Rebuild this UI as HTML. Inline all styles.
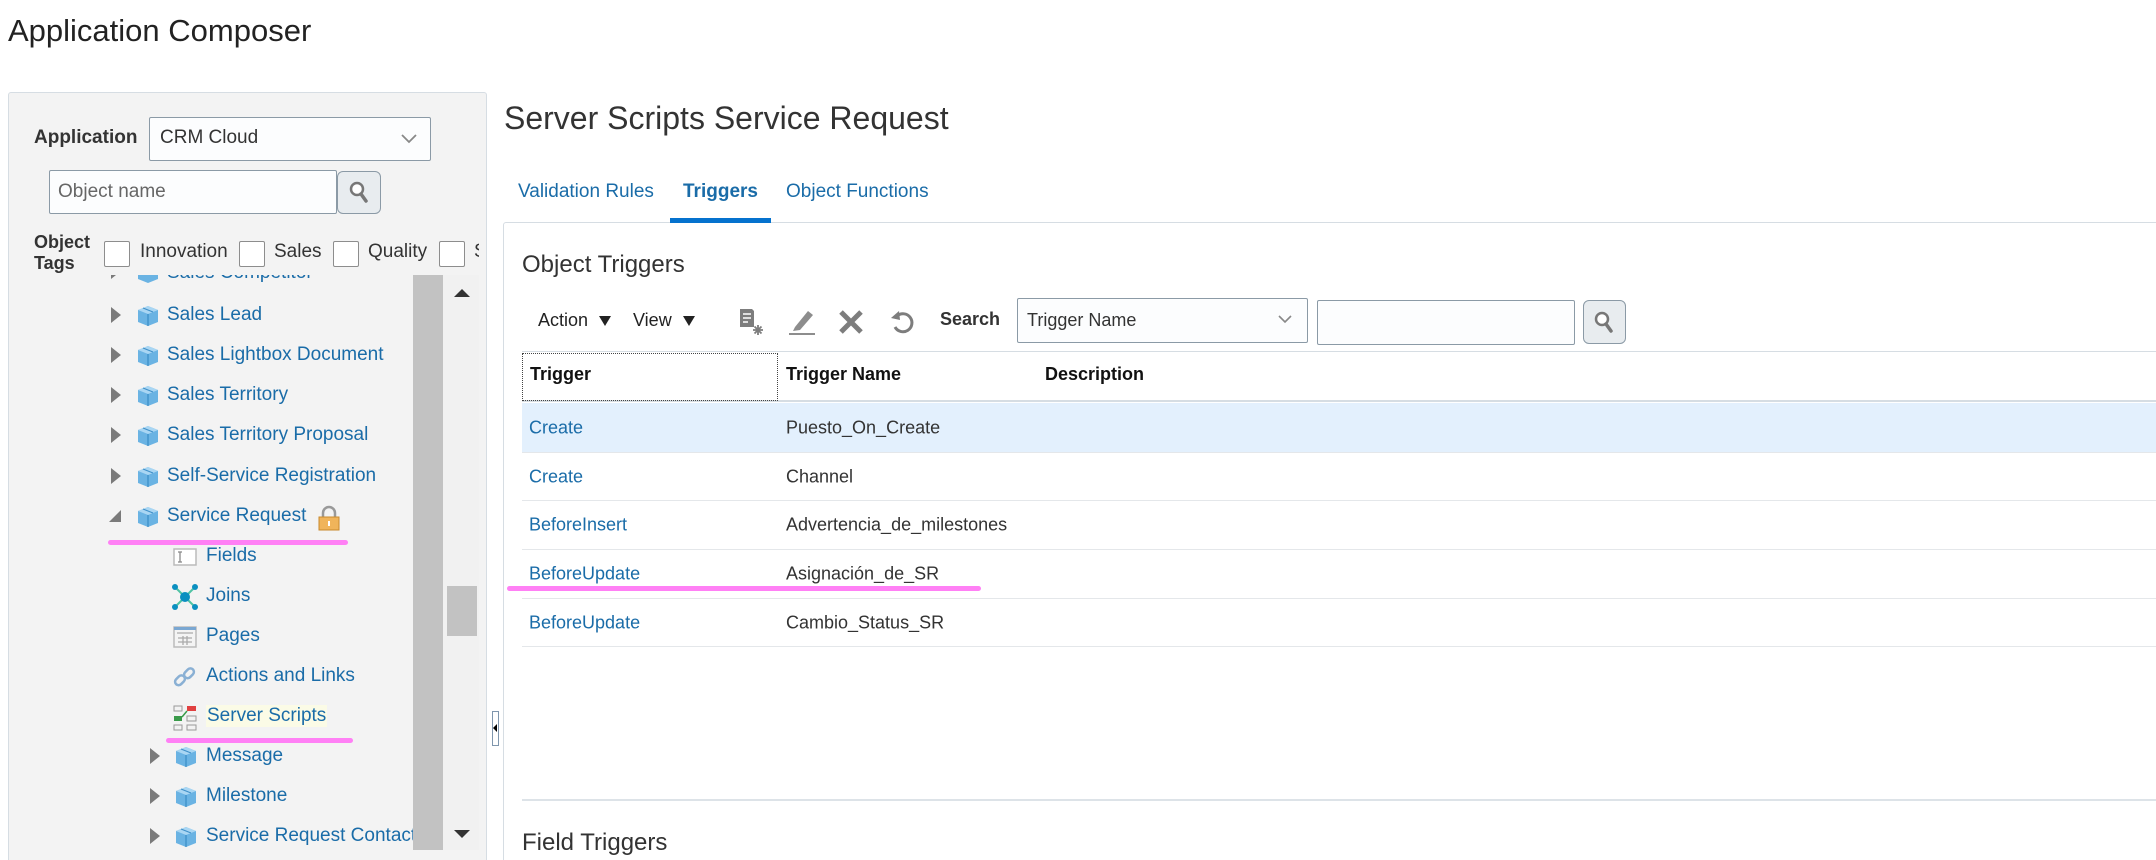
<!DOCTYPE html>
<html><head><meta charset="utf-8"><style>
*{margin:0;padding:0;box-sizing:border-box}
html{width:2156px;height:860px;overflow:hidden}
body{width:2156px;height:860px;overflow:hidden;background:#fff;font-family:"Liberation Sans",Arial,sans-serif;position:relative;color:#333}
.a{position:absolute;white-space:nowrap}
.lnk{color:#1a6ca8}
.tr{font-size:19px;color:#1a6ca8;line-height:22px}
.arr{position:absolute;width:0;height:0;border-top:8px solid transparent;border-bottom:8px solid transparent;border-left:10px solid #7a7a7a}
.cb{position:absolute;width:26px;height:26px;border:1px solid #8d8d8d;background:#fff;border-radius:2px}
.row{position:absolute;left:522px;width:1634px;border-bottom:1px solid #e4e7ea;font-size:18px}
.row span{position:absolute;top:50%;transform:translateY(-50%)}
</style></head><body>
<div class="a" style="left:8px;top:13px;font-size:31px;color:#222">Application Composer</div>

<!-- left panel -->
<div class="a" style="left:8px;top:92px;width:479px;height:790px;background:#f3f3f3;border:1px solid #d6dde3;border-radius:3px"></div>
<div class="a" style="left:34px;top:127px;font-size:19px;font-weight:bold;color:#333">Application</div>
<div class="a" style="left:149px;top:117px;width:282px;height:44px;background:#fcfdfe;border:1px solid #8b9aa6;border-radius:2px"></div>
<div class="a" style="left:160px;top:127px;font-size:19px;color:#333">CRM Cloud</div>
<svg class="a" style="left:400px;top:133px" width="18" height="12"><path d="M2 2 L9 9 L16 2" stroke="#888" stroke-width="1.8" fill="none"/></svg>
<div class="a" style="left:49px;top:170px;width:288px;height:44px;background:#fcfdfe;border:1px solid #8b9aa6;border-radius:2px"></div>
<div class="a" style="left:58px;top:181px;font-size:19px;color:#666">Object name</div>
<div class="a" style="left:337px;top:171px;width:44px;height:43px;background:#e8ecef;border:1px solid #8b9aa6;border-radius:6px"></div>
<svg class="a" style="left:347px;top:179px" width="24" height="26"><circle cx="10" cy="10" r="6" stroke="#777" stroke-width="2.5" fill="#fff"/><path d="M14 15 L19 22" stroke="#777" stroke-width="3.5" stroke-linecap="round"/></svg>
<div class="a" style="left:34px;top:232px;font-size:18px;font-weight:bold;line-height:21px;color:#333">Object<br>Tags</div>
<div class="cb" style="left:104px;top:241px"></div><div class="a" style="left:140px;top:241px;font-size:19px">Innovation</div>
<div class="cb" style="left:239px;top:241px"></div><div class="a" style="left:274px;top:241px;font-size:19px">Sales</div>
<div class="cb" style="left:333px;top:241px"></div><div class="a" style="left:368px;top:241px;font-size:19px">Quality</div>
<div class="cb" style="left:439px;top:241px"></div>
<div class="a" style="left:474px;top:241px;width:5px;overflow:hidden;font-size:19px">S</div>

<!-- tree -->
<div class="a" style="left:100px;top:275px;width:313px;height:585px;overflow:hidden">
<div class="arr" style="left:11px;top:-12px"></div>
<svg class="a" style="left:37px;top:-13px" width="22" height="22"><path d="M11 1 L21 5 L21 17 L11 21 L1 17 L1 5 Z" fill="#6ab3e3"/></svg>
<div class="a tr" style="left:67px;top:-13px">Sales Competitor</div>
</div>
<div class="a" style="left:413px;top:275px;width:30px;height:575px;background:#c2c2c2"></div>
<div class="a" style="left:443px;top:275px;width:36px;height:575px;background:#f1f1f1"></div>
<div class="a" style="left:454px;top:289px;border-left:8px solid transparent;border-right:8px solid transparent;border-bottom:8px solid #333"></div>
<div class="a" style="left:447px;top:586px;width:30px;height:50px;background:#c2c2c2"></div>
<div class="a" style="left:454px;top:830px;border-left:8px solid transparent;border-right:8px solid transparent;border-top:8px solid #333"></div>

<svg width="0" height="0" style="position:absolute"><defs><g id="cb"><path d="M11 1 L21 5 L21 17 L11 21 L1 17 L1 5 Z" fill="#6ab3e3"/><path d="M1 5 L11 9 L21 5 L11 1 Z" fill="#a9d6f3"/><path d="M11 9 L11 21" stroke="#3d8fc8" stroke-width="1.3"/><path d="M6 3 L16 7" stroke="#3d8fc8" stroke-width="1"/></g></defs></svg>

<div class="arr" style="left:111px;top:307px"></div><svg class="a" style="left:137px;top:305px" width="22" height="22"><use href="#cb"/></svg><div class="a tr" style="left:167px;top:304px">Sales Lead</div>
<div class="arr" style="left:111px;top:347px"></div><svg class="a" style="left:137px;top:345px" width="22" height="22"><use href="#cb"/></svg><div class="a tr" style="left:167px;top:344px">Sales Lightbox Document</div>
<div class="arr" style="left:111px;top:387px"></div><svg class="a" style="left:137px;top:385px" width="22" height="22"><use href="#cb"/></svg><div class="a tr" style="left:167px;top:384px">Sales Territory</div>
<div class="arr" style="left:111px;top:427px"></div><svg class="a" style="left:137px;top:425px" width="22" height="22"><use href="#cb"/></svg><div class="a tr" style="left:167px;top:424px">Sales Territory Proposal</div>
<div class="arr" style="left:111px;top:468px"></div><svg class="a" style="left:137px;top:466px" width="22" height="22"><use href="#cb"/></svg><div class="a tr" style="left:167px;top:465px">Self-Service Registration</div>
<div class="a" style="left:109px;top:510px;border-left:12px solid transparent;border-bottom:12px solid #7a7a7a"></div>
<svg class="a" style="left:137px;top:506px" width="22" height="22"><use href="#cb"/></svg><div class="a tr" style="left:167px;top:505px">Service Request</div>
<svg class="a" style="left:316px;top:505px" width="26" height="26"><path d="M7 12 V8 a6 6 0 0 1 12 0 V12" stroke="#999" stroke-width="2.5" fill="none"/><rect x="3" y="12" width="20" height="13" fill="#f0b45a" stroke="#c98a2e"/><rect x="12" y="16" width="2" height="5" fill="#fff"/></svg>
<div class="a" style="left:108px;top:540px;width:240px;height:5px;border-radius:3px;background:#ff80f5"></div>

<svg class="a" style="left:173px;top:548px" width="24" height="18"><rect x="1" y="1" width="22" height="16" fill="#fff" stroke="#bbb" stroke-width="1.5"/><path d="M5 4 H9 M7 4 V14 M5 14 H9" stroke="#888" stroke-width="1.3"/></svg><div class="a tr" style="left:206px;top:545px">Fields</div>
<svg class="a" style="left:172px;top:584px" width="26" height="26"><path d="M3 3 L23 23 M23 3 L3 23" stroke="#4fc3a3" stroke-width="2"/><circle cx="13" cy="13" r="5" fill="#0a8fc0"/><circle cx="3" cy="3" r="3" fill="#0a8fc0"/><circle cx="23" cy="3" r="3" fill="#0a8fc0"/><circle cx="3" cy="23" r="3" fill="#0a8fc0"/><circle cx="23" cy="23" r="3" fill="#0a8fc0"/></svg><div class="a tr" style="left:206px;top:585px">Joins</div>
<svg class="a" style="left:173px;top:626px" width="24" height="22"><rect x="1" y="1" width="22" height="20" fill="#f4f4f4" stroke="#bbb" stroke-width="1.5"/><rect x="1" y="1" width="22" height="3" fill="#7aa7d2"/><path d="M4 7 H20 M5 12 H19 M5 16 H19 M10 10 V19 M14 10 V19" stroke="#aaa" stroke-width="1.3"/></svg><div class="a tr" style="left:206px;top:625px">Pages</div>
<svg class="a" style="left:173px;top:666px" width="24" height="24"><rect x="2" y="11" width="11" height="7" rx="3.5" transform="rotate(-45 7 15)" fill="none" stroke="#8ab0d4" stroke-width="2.5"/><rect x="11" y="4" width="11" height="7" rx="3.5" transform="rotate(-45 16 8)" fill="none" stroke="#8ab0d4" stroke-width="2.5"/></svg><div class="a tr" style="left:206px;top:665px">Actions and Links</div>
<svg class="a" style="left:173px;top:705px" width="24" height="26"><rect x="1" y="1" width="8" height="5" fill="none" stroke="#999"/><rect x="14" y="1" width="9" height="5" fill="#e04040"/><rect x="1" y="11" width="8" height="5" fill="#3a9a4a"/><rect x="14" y="11" width="9" height="5" fill="none" stroke="#999"/><rect x="1" y="20" width="8" height="5" fill="none" stroke="#999"/><rect x="14" y="20" width="9" height="5" fill="none" stroke="#999"/><path d="M9 12 L14 6" stroke="#3a9a4a" stroke-width="1.5"/></svg>
<div class="a tr" style="left:206px;top:705px;background:#fbfbe6;padding:0 1px">Server Scripts</div>
<div class="a" style="left:166px;top:738px;width:187px;height:5px;border-radius:3px;background:#ff80f5"></div>

<div class="arr" style="left:150px;top:748px"></div><svg class="a" style="left:175px;top:746px" width="22" height="22"><use href="#cb"/></svg><div class="a tr" style="left:206px;top:745px">Message</div>
<div class="arr" style="left:150px;top:788px"></div><svg class="a" style="left:175px;top:786px" width="22" height="22"><use href="#cb"/></svg><div class="a tr" style="left:206px;top:785px">Milestone</div>
<div class="arr" style="left:150px;top:828px"></div><svg class="a" style="left:175px;top:826px" width="22" height="22"><use href="#cb"/></svg>
<div class="a" style="left:206px;top:825px;width:207px;overflow:hidden"><div class="tr">Service Request Contacts</div></div>

<!-- collapse handle -->
<div class="a" style="left:492px;top:711px;width:7px;height:35px;border:1px solid #7f96ad;background:#fff"></div>
<div class="a" style="left:493px;top:724px;border-top:4px solid transparent;border-bottom:4px solid transparent;border-right:4px solid #000"></div>

<!-- right -->
<div class="a" style="left:504px;top:100px;font-size:32px;color:#333">Server Scripts Service Request</div>
<div class="a lnk" style="left:518px;top:181px;font-size:19px">Validation Rules</div>
<div class="a" style="left:683px;top:181px;font-size:19px;font-weight:bold;color:#1a6ca8">Triggers</div>
<div class="a lnk" style="left:786px;top:181px;font-size:19px">Object Functions</div>
<div class="a" style="left:503px;top:222px;width:1660px;height:638px;border:1px solid #d6dde3;border-bottom:none;border-radius:3px 3px 0 0"></div>
<div class="a" style="left:670px;top:218px;width:101px;height:5px;background:#0572ce"></div>

<div class="a" style="left:522px;top:251px;font-size:24px;color:#333">Object Triggers</div>
<div class="a" style="left:538px;top:310px;font-size:18px;color:#222">Action</div>
<div class="a" style="left:599px;top:316px;border-left:6px solid transparent;border-right:6px solid transparent;border-top:10px solid #222"></div>
<div class="a" style="left:633px;top:310px;font-size:18px;color:#222">View</div>
<div class="a" style="left:683px;top:316px;border-left:6px solid transparent;border-right:6px solid transparent;border-top:10px solid #222"></div>
<svg class="a" style="left:738px;top:307px" width="28" height="30"><path d="M2 2 H14 L16 4 V20 H2 Z" fill="#7d7d7d"/><path d="M5 7 H13 M5 11 H13 M5 15 H10" stroke="#fff" stroke-width="1.5"/><path d="M20 18 V28 M15 23 H25 M16.5 19.5 L23.5 26.5 M23.5 19.5 L16.5 26.5" stroke="#7d7d7d" stroke-width="1.8"/></svg>
<svg class="a" style="left:787px;top:307px" width="30" height="30"><path d="M8 20 L21 4 L26 8 L13 23 L6 24 Z" fill="#8d8d8d"/><path d="M2 27 H28" stroke="#8d8d8d" stroke-width="2"/></svg>
<svg class="a" style="left:837px;top:308px" width="28" height="28"><path d="M4 4 L24 24 M24 4 L4 24" stroke="#7d7d7d" stroke-width="5"/></svg>
<svg class="a" style="left:888px;top:308px" width="28" height="28"><path d="M9 8 A9 9 0 1 1 7 19" stroke="#7d7d7d" stroke-width="3" fill="none"/><path d="M3 10 L11 3 L12 12 Z" fill="#7d7d7d"/></svg>
<div class="a" style="left:940px;top:309px;font-size:18px;font-weight:bold;color:#333">Search</div>
<div class="a" style="left:1017px;top:298px;width:291px;height:45px;background:#fcfdfe;border:1px solid #8b9aa6;border-radius:2px"></div>
<div class="a" style="left:1027px;top:310px;font-size:18px;color:#333">Trigger Name</div>
<svg class="a" style="left:1277px;top:314px" width="16" height="12"><path d="M2 2 L8 8 L14 2" stroke="#888" stroke-width="1.6" fill="none"/></svg>
<div class="a" style="left:1317px;top:300px;width:258px;height:45px;background:#fcfdfe;border:1px solid #8b9aa6;border-radius:2px"></div>
<div class="a" style="left:1583px;top:300px;width:43px;height:44px;background:#e8ecef;border:1px solid #8b9aa6;border-radius:6px"></div>
<svg class="a" style="left:1592px;top:309px" width="24" height="26"><circle cx="10" cy="10" r="6" stroke="#777" stroke-width="2.5" fill="#fff"/><path d="M14 15 L19 22" stroke="#777" stroke-width="3.5" stroke-linecap="round"/></svg>

<div class="a" style="left:522px;top:351px;width:1634px;height:51px;border-top:1px solid #d6dde3;border-bottom:2px solid #d6dde3"></div>
<div class="a" style="left:522px;top:353px;width:256px;height:48px;border:1px dotted #444"></div>
<div class="a" style="left:530px;top:364px;font-size:18px;font-weight:bold;color:#111">Trigger</div>
<div class="a" style="left:786px;top:364px;font-size:18px;font-weight:bold;color:#111">Trigger Name</div>
<div class="a" style="left:1045px;top:364px;font-size:18px;font-weight:bold;color:#111">Description</div>

<div class="row" style="top:403px;height:50px;background:#e3f0fd"><span class="lnk" style="left:7px">Create</span><span style="left:264px">Puesto_On_Create</span></div>
<div class="row" style="top:453px;height:48px"><span class="lnk" style="left:7px">Create</span><span style="left:264px">Channel</span></div>
<div class="row" style="top:501px;height:49px"><span class="lnk" style="left:7px">BeforeInsert</span><span style="left:264px">Advertencia_de_milestones</span></div>
<div class="row" style="top:550px;height:49px"><span class="lnk" style="left:7px">BeforeUpdate</span><span style="left:264px">Asignación_de_SR</span></div>
<div class="row" style="top:599px;height:48px"><span class="lnk" style="left:7px">BeforeUpdate</span><span style="left:264px">Cambio_Status_SR</span></div>
<div class="a" style="left:507px;top:586px;width:474px;height:5px;border-radius:3px;background:#ff80f5"></div>

<div class="a" style="left:522px;top:799px;width:1634px;height:2px;background:#dde3e8"></div>
<div class="a" style="left:522px;top:829px;font-size:24px;color:#333">Field Triggers</div>
</body></html>
